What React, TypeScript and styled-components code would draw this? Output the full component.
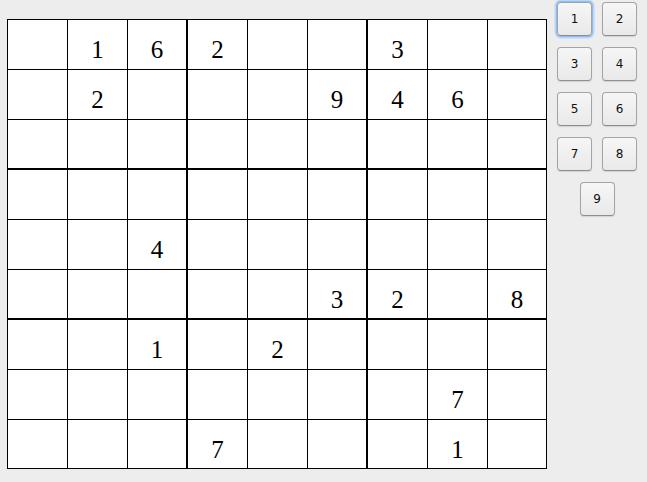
import styled, { createGlobalStyle } from "styled-components";

const GlobalStyle = createGlobalStyle`
  html, body {
    margin: 0;
    padding: 0;
    background: #ededed;
  }
`

type TCellProps = {
  $col: number;
  $row: number;
}

const puzzle: (number | null)[][] = [
  [null, 1, 6, 2, null, null, 3, null, null],
  [null, 2, null, null, null, 9, 4, 6, null],
  [null, null, null, null, null, null, null, null, null],
  [null, null, null, null, null, null, null, null, null],
  [null, null, 4, null, null, null, null, null, null],
  [null, null, null, null, null, 3, 2, null, 8],
  [null, null, 1, null, 2, null, null, null, null],
  [null, null, null, null, null, null, null, 7, null],
  [null, null, null, 7, null, null, null, 1, null],
]

const Page = styled.div`
  display: flex;
  align-items: flex-start;
  gap: 10px;
  padding-left: 7px;
  width: 647px;
  height: 482px;
  box-sizing: border-box;
`

const Board = styled.div`
  display: grid;
  grid-template-columns: repeat(8, 60px) 59px;
  grid-template-rows: repeat(8, 50px) 49px;
  margin-top: 19px;
  border-left: 1px solid #000;
  border-top: 1px solid #000;
  background: #fff;
`

const Cell = styled.div<TCellProps>`
  display: flex;
  align-items: center;
  justify-content: center;
  box-sizing: border-box;
  padding-top: 11px;
  border-right: ${p => (p.$col === 2 || p.$col === 5) ? '2px' : '1px'} solid #000;
  border-bottom: ${p => (p.$row === 2 || p.$row === 5) ? '2px' : '1px'} solid #000;
  font-family: "Liberation Serif", "Times New Roman", serif;
  font-size: 25px;
  color: #000;
`

const Pad = styled.div`
  display: grid;
  grid-template-columns: repeat(2, 35px);
  grid-auto-rows: 34px;
  column-gap: 10px;
  row-gap: 11px;
  margin-top: 2px;
`

const NumButton = styled.button<{ $focused?: boolean; $wide?: boolean }>`
  grid-column: ${p => p.$wide ? '1 / span 2' : 'auto'};
  justify-self: center;
  width: 35px;
  height: 34px;
  padding: 0;
  border: 1px solid #a4a4a4;
  border-bottom-color: #8e8e8e;
  border-radius: 4px;
  background: linear-gradient(#f6f6f6, #e9e9e9);
  box-shadow: ${p => p.$focused
    ? '0 0 0 1px #8cbcf0, 0 0 0 2.5px #b8d6f8'
    : '0 1px 1px rgba(0, 0, 0, 0.12)'};
  font-family: "DejaVu Sans", "Liberation Sans", sans-serif;
  font-size: 12px;
  color: #111;
  cursor: pointer;
`

const App = () => {
  return (
    <>
      <GlobalStyle />
      <Page>
        <Board>
          { puzzle.map((row, r) =>
            row.map((value, c) => (
              <Cell key={`${r}-${c}`} $row={r} $col={c}>
                { value ?? '' }
              </Cell>
            ))
          ) }
        </Board>
        <Pad>
          { [1, 2, 3, 4, 5, 6, 7, 8, 9].map((n) => (
            <NumButton key={n} $focused={n === 1} $wide={n === 9}>
              { n }
            </NumButton>
          )) }
        </Pad>
      </Page>
    </>
  )
}

export default App
